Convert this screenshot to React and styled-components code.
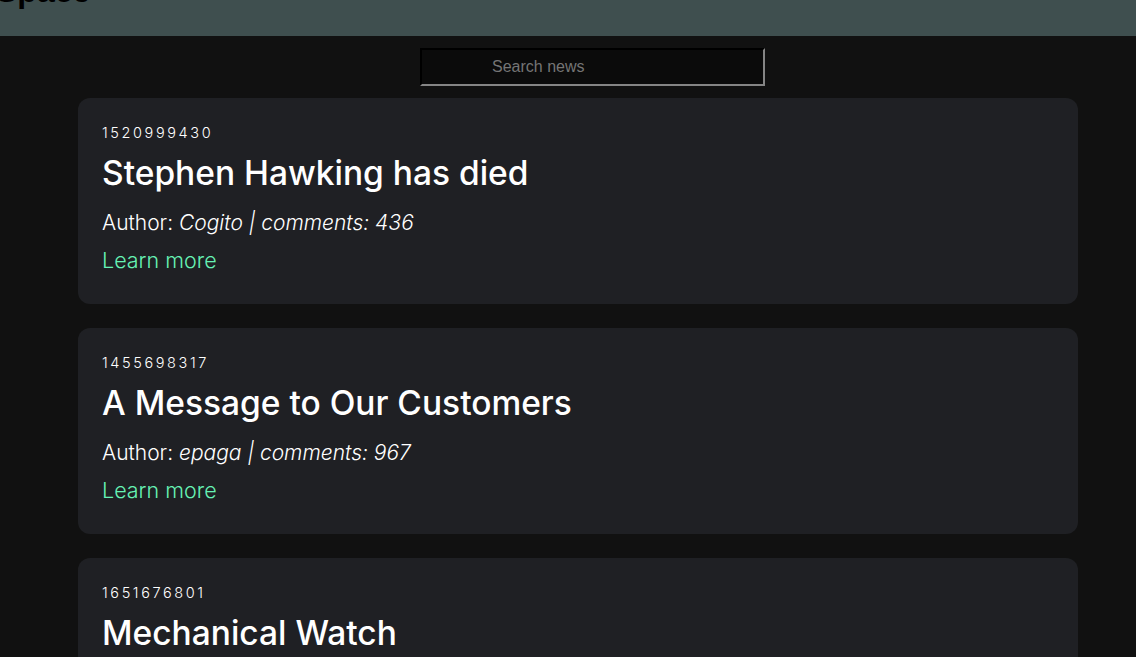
import styled, { createGlobalStyle } from "styled-components";

const GlobalStyle = createGlobalStyle`
  body {
    margin: 0;
    background: #111111;
    font-family: "Inter", "Liberation Sans", sans-serif;
    color: #ffffff;
  }
`;

const Header = styled.header`
  height: 36px;
  background: #3f4f4f;
  overflow: hidden;
`;

const Brand = styled.h1`
  margin: -27px 0 0 -4px;
  font-family: "Liberation Sans", Arial, sans-serif;
  font-size: 32px;
  line-height: 36px;
  font-weight: 700;
  color: #000000;
`;

const SearchRow = styled.div`
  display: flex;
  justify-content: center;
  padding: 12px 0 12px;
`;

const SearchInput = styled.input`
  box-sizing: border-box;
  width: 345px;
  height: 38px;
  margin-left: 49px;
  padding: 0 0 0 70px;
  background: #0b0b0b;
  border: 2px inset #767676;
  border-color: #2c2c2c #858585 #858585 #2c2c2c;
  color: #ffffff;
  font-family: "Liberation Sans", Arial, sans-serif;
  font-size: 16px;
  outline: none;

  &::placeholder {
    color: #757575;
  }
`;

const NewsList = styled.main`
  width: 1000px;
  margin: 0 auto;
  padding-left: 20px;
  display: flex;
  flex-direction: column;
  gap: 24px;
`;

const Card = styled.article`
  background: #1f2024;
  border-radius: 12px;
  padding: 26px 24px 30px;
`;

const Stamp = styled.div`
  font-size: 14.5px;
  line-height: 18px;
  letter-spacing: 2.6px;
  font-weight: 300;
`;

const Title = styled.h2`
  margin: 11px 0 0;
  font-size: 33.5px;
  line-height: 40px;
  font-weight: 500;
`;

const Meta = styled.p`
  margin: 16px 0 0;
  font-size: 21px;
  line-height: 28px;
  font-weight: 300;

  em {
    font-style: italic;
  }
`;

const MoreLink = styled.a`
  display: inline-block;
  margin-top: 9px;
  font-size: 21.5px;
  line-height: 28px;
  font-weight: 300;
  color: #66f2b4;
  text-decoration: none;
`;

const news = [
  { id: 1, time: 1520999430, title: "Stephen Hawking has died", author: "Cogito", comments: 436 },
  { id: 2, time: 1455698317, title: "A Message to Our Customers", author: "epaga", comments: 967 },
  { id: 3, time: 1651676801, title: "Mechanical Watch", author: "bookofjoe", comments: 215 },
];

const App = () => {
  return (
    <>
      <GlobalStyle />
      <Header>
        <Brand>Space</Brand>
      </Header>
      <SearchRow>
        <SearchInput type="text" placeholder="Search news" />
      </SearchRow>
      <NewsList>
        {news.map((item) => (
          <Card key={item.id}>
            <Stamp>{item.time}</Stamp>
            <Title>{item.title}</Title>
            <Meta>
              Author: <em>{item.author} | comments: {item.comments}</em>
            </Meta>
            <MoreLink href="#">Learn more</MoreLink>
          </Card>
        ))}
      </NewsList>
    </>
  );
};

export default App;
